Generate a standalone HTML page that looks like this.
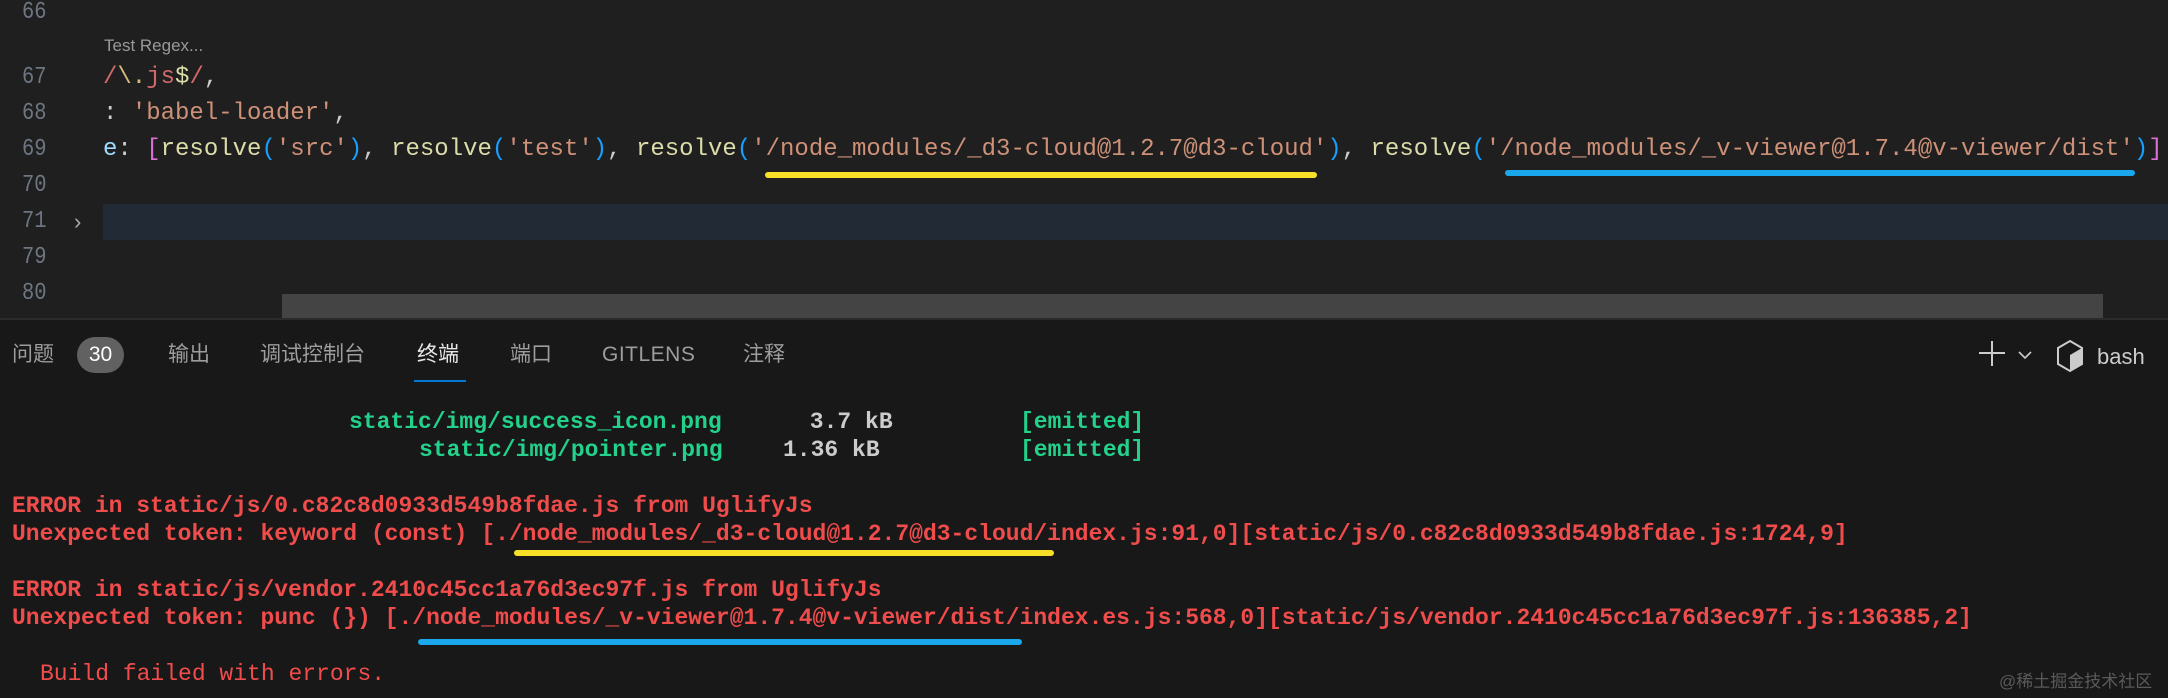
<!DOCTYPE html>
<html><head><meta charset="utf-8"><style>
*{margin:0;padding:0;box-sizing:border-box}
body{width:2168px;height:698px;background:#181818;position:relative;overflow:hidden;font-family:"Liberation Mono",monospace}
.ed{position:absolute;left:0;top:0;width:2168px;height:319px;background:#1f1f1f;overflow:hidden}
.ln{position:absolute;left:22px;width:32px;color:#6e7681;font-size:24px;line-height:36px;transform:scaleX(.85);transform-origin:left}
.cl{position:absolute;left:103px;font-size:24px;line-height:36px;color:#cccccc;white-space:pre}
.hl{position:absolute;left:103px;top:204px;width:2065px;height:36px;background:#222a35}
.s{color:#ce9178}.f{color:#dcdcaa}.p{color:#179fff}.b{color:#da70d6}.v{color:#9cdcfe}.r{color:#d16969}.e{color:#d7ba7d}
.ul{position:absolute;height:6px;border-radius:3px}
.tab{position:absolute;top:340px;font-family:"Liberation Sans","Noto Sans CJK SC",sans-serif;font-size:21px;line-height:30px;color:#9d9d9d;white-space:nowrap}
.t{position:absolute;font-size:23px;line-height:28px;font-weight:bold;white-space:pre;color:#f14c4c}
.g{color:#23d18b}.w{color:#cccccc}
</style></head><body>
<div class="ed">
<div class="hl"></div>
<div class="ln" style="top:-5px">66</div>
<div style="position:absolute;left:104px;top:31px;line-height:29px;font-family:'Liberation Sans',sans-serif;font-size:17px;color:#999">Test Regex...</div>
<div class="ln" style="top:60px">67</div>
<div class="ln" style="top:96px">68</div>
<div class="ln" style="top:132px">69</div>
<div class="ln" style="top:168px">70</div>
<div class="ln" style="top:204px">71</div>
<div class="ln" style="top:240px">79</div>
<div class="ln" style="top:276px">80</div>
<div style="position:absolute;left:74px;top:204px;line-height:36px;font-size:22px;color:#aaa;font-family:'Liberation Sans',sans-serif">&#x203A;</div>
<div class="cl" style="top:60px"><span class="r">/</span><span class="e">\.</span><span class="r">js</span><span class="f">$</span><span class="r">/</span>,</div>
<div class="cl" style="top:96px">: <span class="s">'babel-loader'</span>,</div>
<div class="cl" style="top:132px"><span class="v">e</span>: <span class="b">[</span><span class="f">resolve</span><span class="p">(</span><span class="s">'src'</span><span class="p">)</span>, <span class="f">resolve</span><span class="p">(</span><span class="s">'test'</span><span class="p">)</span>, <span class="f">resolve</span><span class="p">(</span><span class="s">'/node_modules/_d3-cloud@1.2.7@d3-cloud'</span><span class="p">)</span>, <span class="f">resolve</span><span class="p">(</span><span class="s">'/node_modules/_v-viewer@1.7.4@v-viewer/dist'</span><span class="p">)</span><span class="b">]</span></div>
<div class="ul" style="left:765px;top:172px;width:552px;background:#f8e028"></div>
<div class="ul" style="left:1505px;top:170px;width:630px;background:#1aa7ec"></div>
<div style="position:absolute;left:282px;top:294px;width:1821px;height:25px;background:#444"></div>
</div>
<div style="position:absolute;left:0;top:318px;width:2168px;height:2px;background:#2b2b2b"></div>
<div class="tab" style="left:12px">问题</div>
<div style="position:absolute;left:77px;top:337px;width:47px;height:36px;border-radius:18px;background:#616161;color:#fff;font-family:'Liberation Sans',sans-serif;font-size:21px;line-height:36px;text-align:center">30</div>
<div class="tab" style="left:168px">输出</div>
<div class="tab" style="left:260px">调试控制台</div>
<div class="tab" style="left:417px;color:#e7e7e7">终端</div>
<div style="position:absolute;left:414px;top:380px;width:52px;height:2px;background:#0078d4"></div>
<div class="tab" style="left:510px">端口</div>
<div class="tab" style="left:602px;letter-spacing:0.5px">GITLENS</div>
<div class="tab" style="left:743px">注释</div>
<svg style="position:absolute;left:1975px;top:336px" width="180" height="40" viewBox="1975 336 180 40">
<path d="M1992 341V366M1979 353H2005" stroke="#ccc" stroke-width="2" fill="none"/>
<path d="M2019 352L2025 358L2031 352" stroke="#ccc" stroke-width="1.6" fill="none"/>
<path d="M2070 341L2082 348V364L2070 371L2058 364V348Z" stroke="#ccc" stroke-width="2" fill="none"/>
<path d="M2070 355L2082 348V364L2070 371Z" fill="#ccc"/>
<text x="2097" y="364" font-family="Liberation Sans,sans-serif" font-size="22" fill="#ccc">bash</text>
</svg>
<div class="t g" style="left:349px;top:408px">static/img/success_icon.png</div>
<div class="t g" style="left:419px;top:436px">static/img/pointer.png</div>
<div class="t w" style="left:796px;top:408px"> 3.7 kB</div>
<div class="t w" style="left:783px;top:436px">1.36 kB</div>
<div class="t g" style="left:1020px;top:408px">[emitted]</div>
<div class="t g" style="left:1020px;top:436px">[emitted]</div>
<div class="t" style="left:12px;top:492px">ERROR in static/js/0.c82c8d0933d549b8fdae.js from UglifyJs</div>
<div class="t" style="left:12px;top:520px">Unexpected token: keyword (const) [./node_modules/_d3-cloud@1.2.7@d3-cloud/index.js:91,0][static/js/0.c82c8d0933d549b8fdae.js:1724,9]</div>
<div class="t" style="left:12px;top:576px">ERROR in static/js/vendor.2410c45cc1a76d3ec97f.js from UglifyJs</div>
<div class="t" style="left:12px;top:604px">Unexpected token: punc (}) [./node_modules/_v-viewer@1.7.4@v-viewer/dist/index.es.js:568,0][static/js/vendor.2410c45cc1a76d3ec97f.js:136385,2]</div>
<div class="t" style="left:40px;top:660px;font-weight:normal">Build failed with errors.</div>
<div class="ul" style="left:514px;top:550px;width:540px;background:#f8e028"></div>
<div class="ul" style="left:418px;top:639px;width:604px;background:#1aa7ec"></div>
<div style="position:absolute;left:1999px;top:667px;white-space:nowrap;font-family:'Liberation Sans','Noto Sans CJK SC',sans-serif;font-size:17px;color:#5a5a5a">@稀土掘金技术社区</div>
</body></html>
